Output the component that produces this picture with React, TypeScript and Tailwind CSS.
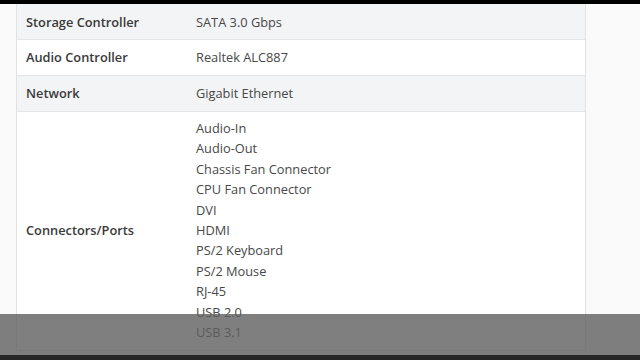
import React from "react";

type Spec = { label: string; values: string[] };

const specs: Spec[] = [
  { label: "Storage Controller", values: ["SATA 3.0 Gbps"] },
  { label: "Audio Controller", values: ["Realtek ALC887"] },
  { label: "Network", values: ["Gigabit Ethernet"] },
  {
    label: "Connectors/Ports",
    values: [
      "Audio-In",
      "Audio-Out",
      "Chassis Fan Connector",
      "CPU Fan Connector",
      "DVI",
      "HDMI",
      "PS/2 Keyboard",
      "PS/2 Mouse",
      "RJ-45",
      "USB 2.0",
      "USB 3.1",
    ],
  },
];

function SpecRow({ spec, striped, first }: { spec: Spec; striped: boolean; first: boolean }) {
  const multi = spec.values.length > 1;
  return (
    <div
      className={`flex items-center border-b border-[#e4e5e7] ${
        striped ? "bg-[#f3f4f6]" : "bg-white"
      } ${multi ? "pt-[6px] pb-[8px]" : first ? "h-[36px] pt-[2px]" : "h-[36px]"}`}
    >
      <div className="w-[179px] shrink-0 pl-[9px] text-[12.8px] font-semibold text-[#3a3a3a]">
        {spec.label}
      </div>
      <div className="flex-1 text-[12.8px] text-[#484848] leading-[20.4px]">
        {spec.values.map((v) => (
          <div key={v}>{v}</div>
        ))}
      </div>
    </div>
  );
}

export default function App() {
  return (
    <div
      className="relative w-[640px] h-[360px] overflow-hidden bg-[#fafafa]"
      style={{ fontFamily: '"Open Sans", "Liberation Sans", sans-serif' }}
    >
      <div className="h-[4px] bg-black" />
      <div className="pl-[16px]">
        <div className="w-[570px] border-x border-[#e2e2e2] bg-white">
          {specs.map((s, i) => (
            <SpecRow key={s.label} spec={s} striped={i % 2 === 0} first={i === 0} />
          ))}
        </div>
      </div>

      {/* player caption strip */}
      <div className="absolute left-0 right-0 top-[314px] h-[41px] bg-[rgba(95,95,95,0.8)]" />
      <div className="absolute left-0 right-0 top-[355px] h-[5px] bg-[#262626]" />
    </div>
  );
}
